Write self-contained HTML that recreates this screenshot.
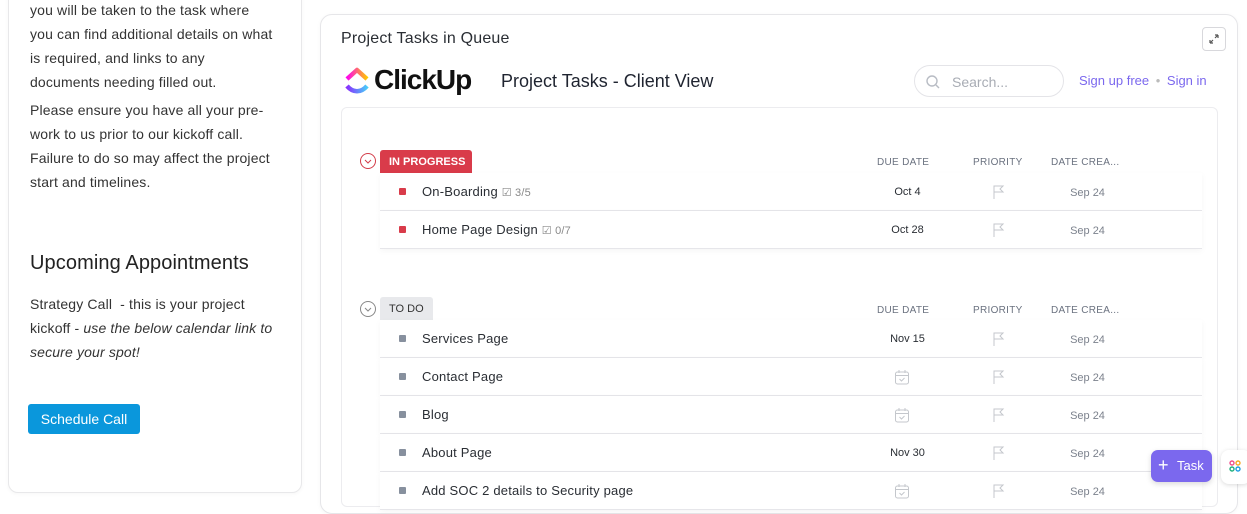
<!DOCTYPE html>
<html><head><meta charset="utf-8"><style>
*{box-sizing:border-box;margin:0;padding:0}
body{width:1247px;height:494px;overflow:hidden;background:#fff;font-family:"Liberation Sans",Arial,sans-serif;position:relative}
.left{position:absolute;left:8px;top:-20px;width:294px;height:513px;background:#fff;border:1px solid #e8e8ea;border-radius:10px;box-shadow:0 1px 4px rgba(0,0,0,.04)}
.lt{position:absolute;left:30px;font-size:14px;color:#333;line-height:24px;white-space:nowrap;letter-spacing:.15px}
.right{position:absolute;left:320px;top:14px;width:918px;height:500px;background:#fff;border:1px solid #e6e6e9;border-radius:12px;box-shadow:0 1px 4px rgba(0,0,0,.04)}
.abs{position:absolute}
.hdr{font-size:10px;color:#6b7280;letter-spacing:.3px}
.row{position:absolute;left:380px;width:822px;height:38px;background:#fff;border-bottom:1px solid #e6e6ea;box-shadow:0 2px 6px rgba(0,0,0,.04)}
.row .sq{position:absolute;left:19px;top:15px;width:7px;height:7px;border-radius:1px}
.row .nm{position:absolute;left:42px;top:11px;font-size:13px;color:#2a2e34;letter-spacing:.2px}
.row .dd{position:absolute;left:470px;width:115px;text-align:center;top:13px;font-size:11px;color:#2a2e34}
.row .dc{position:absolute;left:670px;width:75px;text-align:center;top:14px;font-size:11px;color:#7c828d}
.row .fl{position:absolute;left:612px;top:12px}
.row .cal{position:absolute;left:514px;top:11px}
</style></head><body>
<div class="left"></div>
<div class="lt" style="top:-2px">you will be taken to the task where<br>you can find additional details on what<br>is required, and links to any<br>documents needing filled out.</div>
<div class="lt" style="top:98px">Please ensure you have all your pre-<br>work to us prior to our kickoff call.<br>Failure to do so may affect the project<br>start and timelines.</div>
<div class="lt" style="top:251px;font-size:20px;color:#222;letter-spacing:.1px">Upcoming Appointments</div>
<div class="lt" style="top:292px">Strategy Call &nbsp;- this is your project<br>kickoff - <i>use the below calendar link to</i><br><i>secure your spot!</i></div>
<div class="abs" style="left:28px;top:404px;width:112px;height:30px;background:#0a97dc;border-radius:3px;color:#fff;font-size:14px;text-align:center;line-height:30px">Schedule Call</div>

<div class="right"></div>
<div class="abs" style="left:341px;top:30px;font-size:16px;color:#2a2e34;letter-spacing:.2px">Project Tasks in Queue</div>
<div class="abs" style="left:1202px;top:27px;width:24px;height:24px;border:1px solid #d8d8dc;border-radius:4px"><svg width="22" height="22" viewBox="0 0 22 22" fill="none" stroke="#555" stroke-width="1.2"><path d="M7 15l3-3M7 15v-3M7 15h3M15 7l-3 3M15 7v3M15 7h-3"/></svg></div>
<svg class="abs" style="left:344px;top:66px" width="26" height="30" viewBox="0 0 26 30"><defs><linearGradient id="g1" x1="0" x2="1"><stop offset="0" stop-color="#ff02f0"/><stop offset="1" stop-color="#ffc800"/></linearGradient><linearGradient id="g2" x1="0" x2="1"><stop offset="0" stop-color="#8930fd"/><stop offset="1" stop-color="#49ccf9"/></linearGradient></defs><path d="M3 13l10-9 10 9" stroke="url(#g1)" stroke-width="4.5" fill="none" stroke-linejoin="round"/><path d="M3 20c6 7 14 7 20 0" stroke="url(#g2)" stroke-width="4.5" fill="none"/></svg>
<div class="abs" style="left:374px;top:64px;font-size:28px;font-weight:bold;color:#111;letter-spacing:-1px">ClickUp</div>
<div class="abs" style="left:501px;top:71px;font-size:18px;color:#1f2430">Project Tasks - Client View</div>
<div class="abs" style="left:914px;top:65px;width:150px;height:32px;border:1px solid #e4e4e8;border-radius:16px"><svg class="abs" style="left:10px;top:8px" width="16" height="16" fill="none" stroke="#b8bcc4" stroke-width="1.4"><circle cx="7" cy="7" r="5"/><path d="M11 11l3 3"/></svg><span class="abs" style="left:37px;top:8px;font-size:14px;color:#a8acb4">Search...</span></div>
<div class="abs" style="left:1079px;top:73px;font-size:13px;color:#7b68ee">Sign up free <span style="color:#bbb;margin:0 3px">•</span> Sign in</div>
<div class="abs" style="left:341px;top:107px;width:877px;height:400px;border:1px solid #ececef;border-radius:6px;background:#fff"></div>

<svg class="abs" style="left:360px;top:153px" width="16" height="16" fill="none" stroke="#d33d4a" stroke-width="1"><circle cx="8" cy="8" r="7.5"/><path d="M5 7l3 3 3-3"/></svg>
<div class="abs" style="left:380px;top:150px;width:92px;height:23px;background:#d93b4a;border-radius:3px 3px 0 0;color:#fff;font-size:11px;font-weight:bold;line-height:24px;padding-left:9px">IN PROGRESS</div>
<div class="abs hdr" style="left:877px;top:157px">DUE DATE</div>
<div class="abs hdr" style="left:973px;top:157px">PRIORITY</div>
<div class="abs hdr" style="left:1051px;top:157px">DATE CREA...</div>

<svg class="abs" style="left:360px;top:301px" width="16" height="16" fill="none" stroke="#888" stroke-width="1"><circle cx="8" cy="8" r="7.5"/><path d="M5 7l3 3 3-3"/></svg>
<div class="abs" style="left:380px;top:297px;width:53px;height:23px;background:#e8e9ec;border-radius:3px 3px 0 0;color:#333;font-size:11px;line-height:25px;padding-left:9px">TO DO</div>
<div class="abs hdr" style="left:877px;top:305px">DUE DATE</div>
<div class="abs hdr" style="left:973px;top:305px">PRIORITY</div>
<div class="abs hdr" style="left:1051px;top:305px">DATE CREA...</div>

<div class="row" style="top:173px"><div class="sq" style="background:#d93b4a"></div><div class="nm">On-Boarding <span style="color:#888;font-size:11px">☑ 3/5</span></div><div class="dd">Oct 4</div><svg class="fl" width="14" height="14" fill="none" stroke="#c4c7cc"><path d="M2 14V1h9l-3 3 3 3H2"/></svg><div class="dc">Sep 24</div></div>
<div class="row" style="top:211px"><div class="sq" style="background:#d93b4a"></div><div class="nm">Home Page Design <span style="color:#888;font-size:11px">☑ 0/7</span></div><div class="dd">Oct 28</div><svg class="fl" width="14" height="14" fill="none" stroke="#c4c7cc"><path d="M2 14V1h9l-3 3 3 3H2"/></svg><div class="dc">Sep 24</div></div>

<div class="row" style="top:320px"><div class="sq" style="background:#87909e"></div><div class="nm">Services Page</div><div class="dd">Nov 15</div><svg class="fl" width="14" height="14" fill="none" stroke="#c4c7cc"><path d="M2 14V1h9l-3 3 3 3H2"/></svg><div class="dc">Sep 24</div></div>
<div class="row" style="top:358px"><div class="sq" style="background:#87909e"></div><div class="nm">Contact Page</div><svg class="cal" width="16" height="16" fill="none" stroke="#c4c7cc"><rect x="1.5" y="3" width="13" height="12" rx="2"/><path d="M1.5 6.5h13M5 1v3M11 1v3M5.5 10l2 2 3-3"/></svg><svg class="fl" width="14" height="14" fill="none" stroke="#c4c7cc"><path d="M2 14V1h9l-3 3 3 3H2"/></svg><div class="dc">Sep 24</div></div>
<div class="row" style="top:396px"><div class="sq" style="background:#87909e"></div><div class="nm">Blog</div><svg class="cal" width="16" height="16" fill="none" stroke="#c4c7cc"><rect x="1.5" y="3" width="13" height="12" rx="2"/><path d="M1.5 6.5h13M5 1v3M11 1v3M5.5 10l2 2 3-3"/></svg><svg class="fl" width="14" height="14" fill="none" stroke="#c4c7cc"><path d="M2 14V1h9l-3 3 3 3H2"/></svg><div class="dc">Sep 24</div></div>
<div class="row" style="top:434px"><div class="sq" style="background:#87909e"></div><div class="nm">About Page</div><div class="dd">Nov 30</div><svg class="fl" width="14" height="14" fill="none" stroke="#c4c7cc"><path d="M2 14V1h9l-3 3 3 3H2"/></svg><div class="dc">Sep 24</div></div>
<div class="row" style="top:472px"><div class="sq" style="background:#87909e"></div><div class="nm">Add SOC 2 details to Security page</div><svg class="cal" width="16" height="16" fill="none" stroke="#c4c7cc"><rect x="1.5" y="3" width="13" height="12" rx="2"/><path d="M1.5 6.5h13M5 1v3M11 1v3M5.5 10l2 2 3-3"/></svg><svg class="fl" width="14" height="14" fill="none" stroke="#c4c7cc"><path d="M2 14V1h9l-3 3 3 3H2"/></svg><div class="dc">Sep 24</div></div>

<div class="abs" style="left:1151px;top:450px;width:61px;height:32px;background:#7b68ee;border-radius:7px;color:#fff;font-size:13px;line-height:32px;box-shadow:0 2px 6px rgba(0,0,0,.15)"><span style="position:absolute;left:7px;top:-1px;font-size:18px">+</span><span style="position:absolute;left:26px">Task</span></div>
<div class="abs" style="left:1221px;top:450px;width:30px;height:34px;background:#fff;border-radius:8px;box-shadow:0 1px 5px rgba(0,0,0,.15)"><svg class="abs" style="left:8px;top:10px" width="14" height="14" fill="none" stroke-width="1.4"><circle cx="3" cy="3" r="2" stroke="#f0508c"/><circle cx="9" cy="3" r="2" stroke="#f7a823"/><circle cx="3" cy="9" r="2" stroke="#22b07d"/><circle cx="9" cy="9" r="2" stroke="#1d9be0"/></svg></div>
</body></html>
